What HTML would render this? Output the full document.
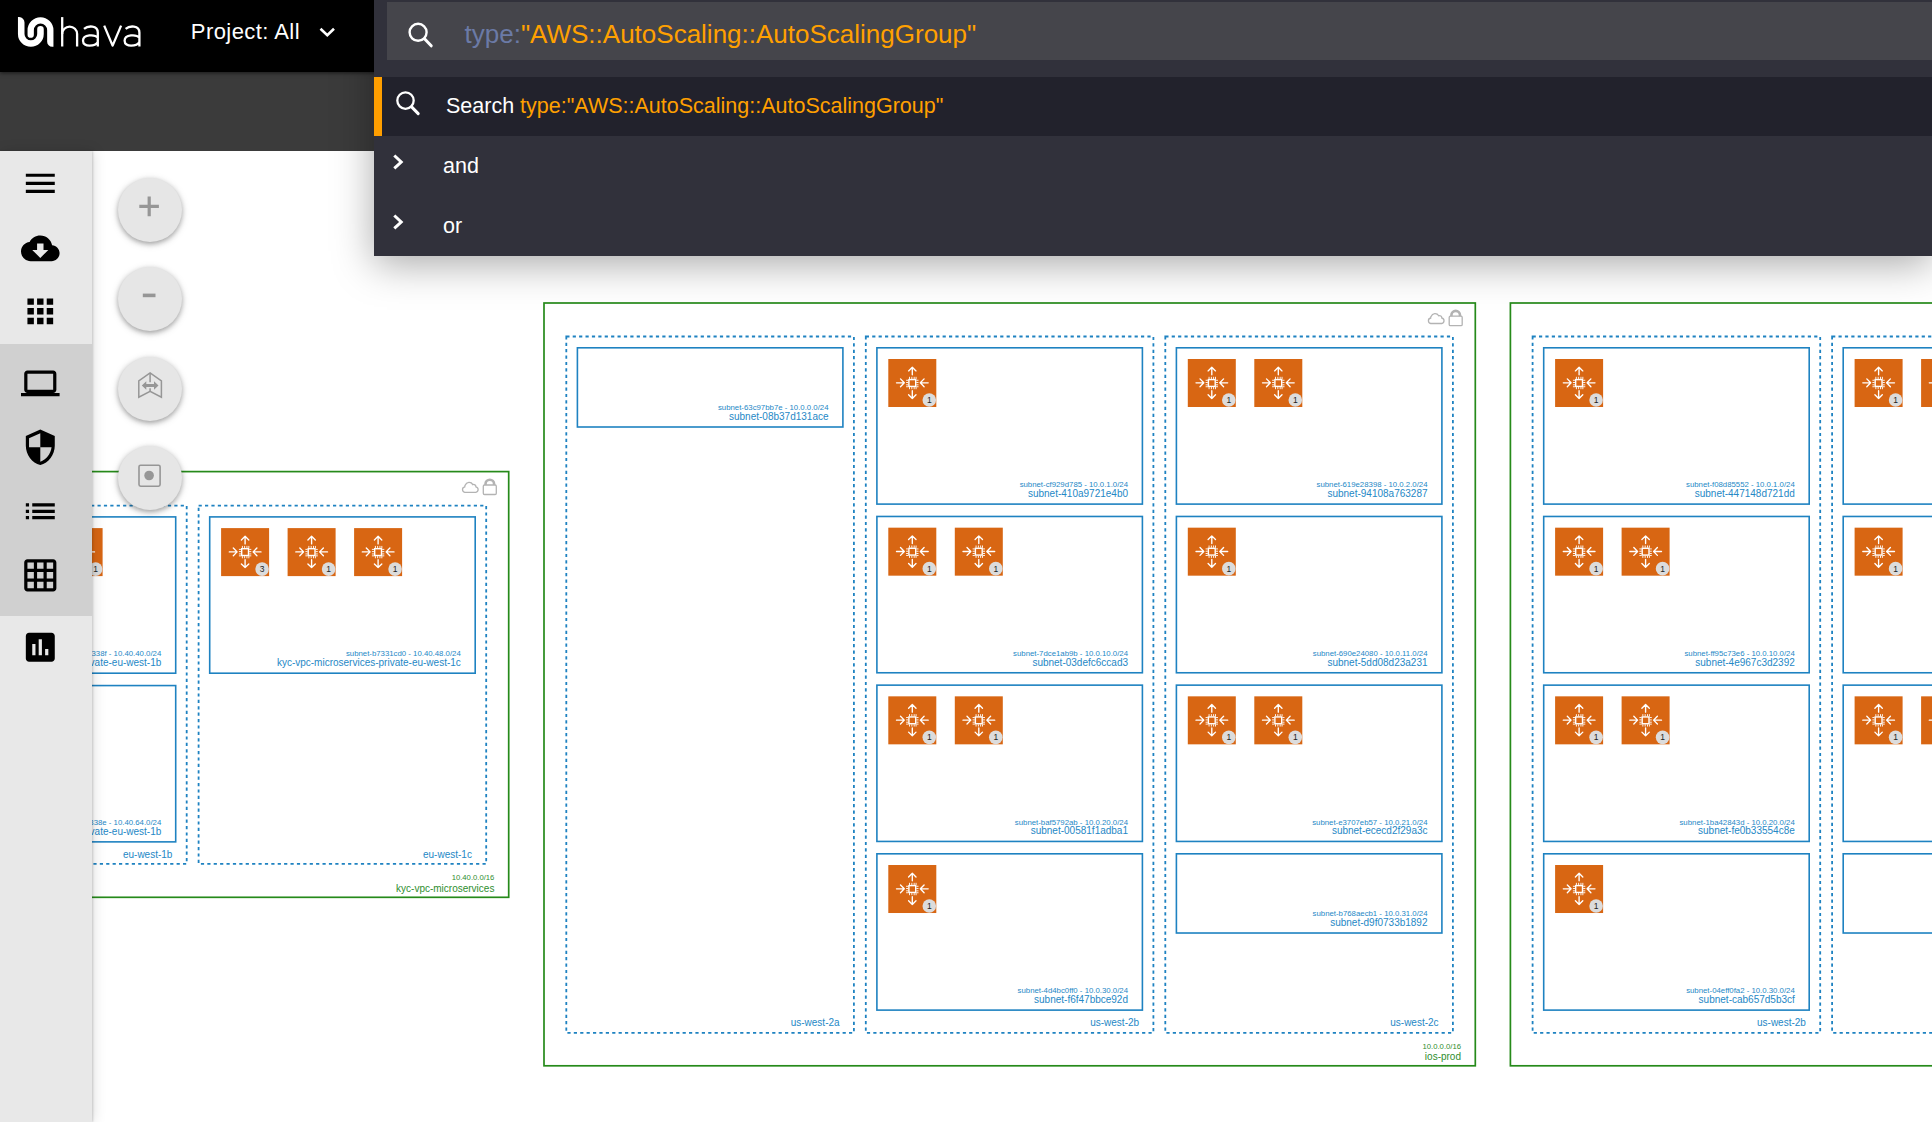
<!DOCTYPE html>
<html><head><meta charset="utf-8">
<style>
html,body{margin:0;padding:0;}
body{width:1932px;height:1122px;overflow:hidden;position:relative;background:#fff;font-family:"Liberation Sans",sans-serif;}
.abs{position:absolute;}
#diagram{position:absolute;left:0;top:0;}
#diagram text{font-family:"Liberation Sans",sans-serif;}
#hdr{position:absolute;left:0;top:0;width:1932px;height:72px;background:#000;z-index:2;box-shadow:0 1px 4px rgba(0,0,0,0.6);}
#gbar{position:absolute;left:0;top:72px;width:1932px;height:79px;background:#3b3b3b;}
#side{position:absolute;left:0;top:151px;width:92px;height:971px;background:#e8e8e8;box-shadow:1px 0 2px rgba(0,0,0,0.16),2px 0 12px rgba(0,0,0,0.13);}
#sideact{position:absolute;left:0;top:193px;width:92px;height:272px;background:#d0d0d0;}
.sic{position:absolute;left:21.3px;width:38.6px;height:38.6px;}
.zb{position:absolute;left:118px;width:64px;height:64px;border-radius:50%;background:#e6e6e6;box-shadow:0 2px 5px rgba(0,0,0,0.3),0 2px 10px rgba(0,0,0,0.12);}
.zb svg{position:absolute;left:0;top:0;}
#dd{z-index:3;position:absolute;left:374px;top:0;width:1558px;height:256px;background:#31313b;box-shadow:0 8px 38px rgba(0,0,0,0.34);}
#inp{position:absolute;left:13px;top:2px;width:1560px;height:58px;background:#45454b;}
#sel{position:absolute;left:0;top:77px;width:1558px;height:59px;background:#22222c;}
#obar{position:absolute;left:0;top:0;width:8px;height:59px;background:#ff9f00;}
.t{position:absolute;white-space:pre;line-height:1;}
</style></head><body>
<svg id="diagram" width="1932" height="1122" viewBox="0 0 1932 1122">
<defs>
<g id="asg">
<rect x="0" y="0" width="48" height="48" fill="#d86613"/>
<g fill="none" stroke="#fff" stroke-width="1.35" stroke-linecap="round" stroke-linejoin="round">
<path d="M24 8.2v7.6M20.3 11.9L24 8.2L27.7 11.9"/>
<path d="M24 31.7v7.8M20.3 35.8L24 39.5L27.7 35.8"/>
<path d="M8.2 23.8h7.7M12.2 19.9L16 23.8L12.2 27.7"/>
<path d="M39.9 23.8h-7.8M35.8 19.9L32 23.8L35.8 27.7"/>
</g>
<rect x="20.6" y="20.6" width="6.8" height="6.8" fill="none" stroke="#fff" stroke-width="1.4"/>
<g fill="#fff">
<rect x="20.8" y="17.8" width="0.9" height="2.2"/><rect x="23.1" y="17.8" width="0.9" height="2.2"/><rect x="25.4" y="17.8" width="0.9" height="2.2"/><rect x="27.3" y="17.8" width="0.9" height="2.2"/>
<rect x="20.8" y="28" width="0.9" height="2.2"/><rect x="23.1" y="28" width="0.9" height="2.2"/><rect x="25.4" y="28" width="0.9" height="2.2"/><rect x="27.3" y="28" width="0.9" height="2.2"/>
<rect x="17.8" y="20.8" width="2.2" height="0.9"/><rect x="17.8" y="23.1" width="2.2" height="0.9"/><rect x="17.8" y="25.4" width="2.2" height="0.9"/><rect x="17.8" y="27.3" width="2.2" height="0.9"/>
<rect x="28" y="20.8" width="2.2" height="0.9"/><rect x="28" y="23.1" width="2.2" height="0.9"/><rect x="28" y="25.4" width="2.2" height="0.9"/><rect x="28" y="27.3" width="2.2" height="0.9"/>
</g>
<circle cx="41" cy="41" r="6.8" fill="#dcdcdc"/>
</g>
</defs>
<rect x="544.00" y="303.00" width="931.30" height="762.80" fill="none" stroke="#268a1a" stroke-width="1.7"/>
<text x="1461.00" y="1048.57" font-size="7.7" fill="#2e8e2e" text-anchor="end">10.0.0.0/16</text>
<text x="1461.00" y="1060.10" font-size="10" fill="#2e8e2e" text-anchor="end">ios-prod</text>
<g transform="translate(1427.50,310.20)" fill="none" stroke="#b3b3b3" stroke-width="1.3"><path d="M3.2 13.3 H14.2 A2.8 2.8 0 0 0 14.3 7.8 A2.3 2.3 0 0 0 11.2 5.6 A4.2 4.2 0 0 0 3.6 6.2 A2.2 2.2 0 0 0 3.2 7.8 A2.8 2.8 0 0 0 3.2 13.3 Z"/><rect x="21.7" y="6" width="13" height="9.5" rx="1.2"/><path d="M23.9 6 V5 A4.3 4.3 0 0 1 32.5 5 V6" stroke-width="2.6"/></g>
<rect x="566.30" y="336.50" width="287.60" height="696.30" fill="none" stroke="#1e82c1" stroke-width="1.8" stroke-dasharray="3.2 3.2"/>
<text x="839.60" y="1026.40" font-size="10" fill="#2588c6" text-anchor="end">us-west-2a</text>
<rect x="577.40" y="347.80" width="265.50" height="79.20" fill="none" stroke="#1e82c1" stroke-width="1.6"/>
<text x="828.50" y="410.21" font-size="7.8" fill="#2588c6" text-anchor="end">subnet-63c97bb7e - 10.0.0.0/24</text>
<text x="828.50" y="419.90" font-size="10" fill="#2588c6" text-anchor="end">subnet-08b37d131ace</text>
<rect x="865.80" y="336.50" width="287.60" height="696.30" fill="none" stroke="#1e82c1" stroke-width="1.8" stroke-dasharray="3.2 3.2"/>
<text x="1139.10" y="1026.40" font-size="10" fill="#2588c6" text-anchor="end">us-west-2b</text>
<rect x="876.90" y="347.80" width="265.50" height="156.30" fill="none" stroke="#1e82c1" stroke-width="1.6"/>
<text x="1128.00" y="487.31" font-size="7.8" fill="#2588c6" text-anchor="end">subnet-cf929d785 - 10.0.1.0/24</text>
<text x="1128.00" y="497.00" font-size="10" fill="#2588c6" text-anchor="end">subnet-410a9721e4b0</text>
<use href="#asg" x="888.30" y="359.00"/>
<text x="929.30" y="402.90" font-size="8.5" fill="#222" text-anchor="middle">1</text>
<rect x="876.90" y="516.47" width="265.50" height="156.30" fill="none" stroke="#1e82c1" stroke-width="1.6"/>
<text x="1128.00" y="655.98" font-size="7.8" fill="#2588c6" text-anchor="end">subnet-7dce1ab9b - 10.0.10.0/24</text>
<text x="1128.00" y="665.67" font-size="10" fill="#2588c6" text-anchor="end">subnet-03defc6ccad3</text>
<use href="#asg" x="888.30" y="527.67"/>
<text x="929.30" y="571.57" font-size="8.5" fill="#222" text-anchor="middle">1</text>
<use href="#asg" x="954.80" y="527.67"/>
<text x="995.80" y="571.57" font-size="8.5" fill="#222" text-anchor="middle">1</text>
<rect x="876.90" y="685.14" width="265.50" height="156.30" fill="none" stroke="#1e82c1" stroke-width="1.6"/>
<text x="1128.00" y="824.65" font-size="7.8" fill="#2588c6" text-anchor="end">subnet-baf5792ab - 10.0.20.0/24</text>
<text x="1128.00" y="834.34" font-size="10" fill="#2588c6" text-anchor="end">subnet-00581f1adba1</text>
<use href="#asg" x="888.30" y="696.34"/>
<text x="929.30" y="740.24" font-size="8.5" fill="#222" text-anchor="middle">1</text>
<use href="#asg" x="954.80" y="696.34"/>
<text x="995.80" y="740.24" font-size="8.5" fill="#222" text-anchor="middle">1</text>
<rect x="876.90" y="853.81" width="265.50" height="156.30" fill="none" stroke="#1e82c1" stroke-width="1.6"/>
<text x="1128.00" y="993.32" font-size="7.8" fill="#2588c6" text-anchor="end">subnet-4d4bc0ff0 - 10.0.30.0/24</text>
<text x="1128.00" y="1003.01" font-size="10" fill="#2588c6" text-anchor="end">subnet-f6f47bbce92d</text>
<use href="#asg" x="888.30" y="865.01"/>
<text x="929.30" y="908.91" font-size="8.5" fill="#222" text-anchor="middle">1</text>
<rect x="1165.30" y="336.50" width="287.60" height="696.30" fill="none" stroke="#1e82c1" stroke-width="1.8" stroke-dasharray="3.2 3.2"/>
<text x="1438.60" y="1026.40" font-size="10" fill="#2588c6" text-anchor="end">us-west-2c</text>
<rect x="1176.40" y="347.80" width="265.50" height="156.30" fill="none" stroke="#1e82c1" stroke-width="1.6"/>
<text x="1427.50" y="487.31" font-size="7.8" fill="#2588c6" text-anchor="end">subnet-619e28398 - 10.0.2.0/24</text>
<text x="1427.50" y="497.00" font-size="10" fill="#2588c6" text-anchor="end">subnet-94108a763287</text>
<use href="#asg" x="1187.80" y="359.00"/>
<text x="1228.80" y="402.90" font-size="8.5" fill="#222" text-anchor="middle">1</text>
<use href="#asg" x="1254.30" y="359.00"/>
<text x="1295.30" y="402.90" font-size="8.5" fill="#222" text-anchor="middle">1</text>
<rect x="1176.40" y="516.47" width="265.50" height="156.30" fill="none" stroke="#1e82c1" stroke-width="1.6"/>
<text x="1427.50" y="655.98" font-size="7.8" fill="#2588c6" text-anchor="end">subnet-690e24080 - 10.0.11.0/24</text>
<text x="1427.50" y="665.67" font-size="10" fill="#2588c6" text-anchor="end">subnet-5dd08d23a231</text>
<use href="#asg" x="1187.80" y="527.67"/>
<text x="1228.80" y="571.57" font-size="8.5" fill="#222" text-anchor="middle">1</text>
<rect x="1176.40" y="685.14" width="265.50" height="156.30" fill="none" stroke="#1e82c1" stroke-width="1.6"/>
<text x="1427.50" y="824.65" font-size="7.8" fill="#2588c6" text-anchor="end">subnet-e3707eb57 - 10.0.21.0/24</text>
<text x="1427.50" y="834.34" font-size="10" fill="#2588c6" text-anchor="end">subnet-ececd2f29a3c</text>
<use href="#asg" x="1187.80" y="696.34"/>
<text x="1228.80" y="740.24" font-size="8.5" fill="#222" text-anchor="middle">1</text>
<use href="#asg" x="1254.30" y="696.34"/>
<text x="1295.30" y="740.24" font-size="8.5" fill="#222" text-anchor="middle">1</text>
<rect x="1176.40" y="853.81" width="265.50" height="79.20" fill="none" stroke="#1e82c1" stroke-width="1.6"/>
<text x="1427.50" y="916.22" font-size="7.8" fill="#2588c6" text-anchor="end">subnet-b768aecb1 - 10.0.31.0/24</text>
<text x="1427.50" y="925.91" font-size="10" fill="#2588c6" text-anchor="end">subnet-d9f0733b1892</text>
<rect x="1510.40" y="303.00" width="931.30" height="762.80" fill="none" stroke="#268a1a" stroke-width="1.7"/>
<text x="2427.40" y="1048.57" font-size="7.7" fill="#2e8e2e" text-anchor="end">10.0.0.0/16</text>
<text x="2427.40" y="1060.10" font-size="10" fill="#2e8e2e" text-anchor="end">ios-dev</text>
<rect x="1532.60" y="336.50" width="287.60" height="696.30" fill="none" stroke="#1e82c1" stroke-width="1.8" stroke-dasharray="3.2 3.2"/>
<text x="1805.90" y="1026.40" font-size="10" fill="#2588c6" text-anchor="end">us-west-2b</text>
<rect x="1543.70" y="347.80" width="265.50" height="156.30" fill="none" stroke="#1e82c1" stroke-width="1.6"/>
<text x="1794.80" y="487.31" font-size="7.8" fill="#2588c6" text-anchor="end">subnet-f08d85552 - 10.0.1.0/24</text>
<text x="1794.80" y="497.00" font-size="10" fill="#2588c6" text-anchor="end">subnet-447148d721dd</text>
<use href="#asg" x="1555.10" y="359.00"/>
<text x="1596.10" y="402.90" font-size="8.5" fill="#222" text-anchor="middle">1</text>
<rect x="1543.70" y="516.47" width="265.50" height="156.30" fill="none" stroke="#1e82c1" stroke-width="1.6"/>
<text x="1794.80" y="655.98" font-size="7.8" fill="#2588c6" text-anchor="end">subnet-ff95c73e6 - 10.0.10.0/24</text>
<text x="1794.80" y="665.67" font-size="10" fill="#2588c6" text-anchor="end">subnet-4e967c3d2392</text>
<use href="#asg" x="1555.10" y="527.67"/>
<text x="1596.10" y="571.57" font-size="8.5" fill="#222" text-anchor="middle">1</text>
<use href="#asg" x="1621.60" y="527.67"/>
<text x="1662.60" y="571.57" font-size="8.5" fill="#222" text-anchor="middle">1</text>
<rect x="1543.70" y="685.14" width="265.50" height="156.30" fill="none" stroke="#1e82c1" stroke-width="1.6"/>
<text x="1794.80" y="824.65" font-size="7.8" fill="#2588c6" text-anchor="end">subnet-1ba42843d - 10.0.20.0/24</text>
<text x="1794.80" y="834.34" font-size="10" fill="#2588c6" text-anchor="end">subnet-fe0b33554c8e</text>
<use href="#asg" x="1555.10" y="696.34"/>
<text x="1596.10" y="740.24" font-size="8.5" fill="#222" text-anchor="middle">1</text>
<use href="#asg" x="1621.60" y="696.34"/>
<text x="1662.60" y="740.24" font-size="8.5" fill="#222" text-anchor="middle">1</text>
<rect x="1543.70" y="853.81" width="265.50" height="156.30" fill="none" stroke="#1e82c1" stroke-width="1.6"/>
<text x="1794.80" y="993.32" font-size="7.8" fill="#2588c6" text-anchor="end">subnet-04eff0fa2 - 10.0.30.0/24</text>
<text x="1794.80" y="1003.01" font-size="10" fill="#2588c6" text-anchor="end">subnet-cab657d5b3cf</text>
<use href="#asg" x="1555.10" y="865.01"/>
<text x="1596.10" y="908.91" font-size="8.5" fill="#222" text-anchor="middle">1</text>
<rect x="1832.10" y="336.50" width="287.60" height="696.30" fill="none" stroke="#1e82c1" stroke-width="1.8" stroke-dasharray="3.2 3.2"/>
<text x="2105.40" y="1026.40" font-size="10" fill="#2588c6" text-anchor="end">us-west-2c</text>
<rect x="1843.20" y="347.80" width="265.50" height="156.30" fill="none" stroke="#1e82c1" stroke-width="1.6"/>
<text x="2094.30" y="487.31" font-size="7.8" fill="#2588c6" text-anchor="end">subnet-1 - 10.0.2.0/24</text>
<text x="2094.30" y="497.00" font-size="10" fill="#2588c6" text-anchor="end">subnet-1</text>
<use href="#asg" x="1854.60" y="359.00"/>
<text x="1895.60" y="402.90" font-size="8.5" fill="#222" text-anchor="middle">1</text>
<use href="#asg" x="1921.10" y="359.00"/>
<text x="1962.10" y="402.90" font-size="8.5" fill="#222" text-anchor="middle">1</text>
<rect x="1843.20" y="516.47" width="265.50" height="156.30" fill="none" stroke="#1e82c1" stroke-width="1.6"/>
<text x="2094.30" y="655.98" font-size="7.8" fill="#2588c6" text-anchor="end">subnet-2 - 10.0.11.0/24</text>
<text x="2094.30" y="665.67" font-size="10" fill="#2588c6" text-anchor="end">subnet-2</text>
<use href="#asg" x="1854.60" y="527.67"/>
<text x="1895.60" y="571.57" font-size="8.5" fill="#222" text-anchor="middle">1</text>
<rect x="1843.20" y="685.14" width="265.50" height="156.30" fill="none" stroke="#1e82c1" stroke-width="1.6"/>
<text x="2094.30" y="824.65" font-size="7.8" fill="#2588c6" text-anchor="end">subnet-3 - 10.0.21.0/24</text>
<text x="2094.30" y="834.34" font-size="10" fill="#2588c6" text-anchor="end">subnet-3</text>
<use href="#asg" x="1854.60" y="696.34"/>
<text x="1895.60" y="740.24" font-size="8.5" fill="#222" text-anchor="middle">1</text>
<use href="#asg" x="1921.10" y="696.34"/>
<text x="1962.10" y="740.24" font-size="8.5" fill="#222" text-anchor="middle">1</text>
<rect x="1843.20" y="853.81" width="265.50" height="79.20" fill="none" stroke="#1e82c1" stroke-width="1.6"/>
<text x="2094.30" y="916.22" font-size="7.8" fill="#2588c6" text-anchor="end">subnet-4 - 10.0.31.0/24</text>
<text x="2094.30" y="925.91" font-size="10" fill="#2588c6" text-anchor="end">subnet-4</text>
<rect x="-700.00" y="471.60" width="1208.70" height="425.70" fill="none" stroke="#268a1a" stroke-width="1.7"/>
<text x="494.40" y="880.07" font-size="7.7" fill="#2e8e2e" text-anchor="end">10.40.0.0/16</text>
<text x="494.40" y="891.60" font-size="10" fill="#2e8e2e" text-anchor="end">kyc-vpc-microservices</text>
<g transform="translate(461.60,479.00)" fill="none" stroke="#b3b3b3" stroke-width="1.3"><path d="M3.2 13.3 H14.2 A2.8 2.8 0 0 0 14.3 7.8 A2.3 2.3 0 0 0 11.2 5.6 A4.2 4.2 0 0 0 3.6 6.2 A2.2 2.2 0 0 0 3.2 7.8 A2.8 2.8 0 0 0 3.2 13.3 Z"/><rect x="21.7" y="6" width="13" height="9.5" rx="1.2"/><path d="M23.9 6 V5 A4.3 4.3 0 0 1 32.5 5 V6" stroke-width="2.6"/></g>
<rect x="198.60" y="505.60" width="287.60" height="358.30" fill="none" stroke="#1e82c1" stroke-width="1.8" stroke-dasharray="3.2 3.2"/>
<text x="471.90" y="857.50" font-size="10" fill="#2588c6" text-anchor="end">eu-west-1c</text>
<rect x="209.70" y="516.90" width="265.50" height="156.30" fill="none" stroke="#1e82c1" stroke-width="1.6"/>
<text x="460.80" y="656.41" font-size="7.8" fill="#2588c6" text-anchor="end">subnet-b7331cd0 - 10.40.48.0/24</text>
<text x="460.80" y="666.10" font-size="10" fill="#2588c6" text-anchor="end">kyc-vpc-microservices-private-eu-west-1c</text>
<use href="#asg" x="221.10" y="528.10"/>
<text x="262.10" y="572.00" font-size="8.5" fill="#222" text-anchor="middle">3</text>
<use href="#asg" x="287.60" y="528.10"/>
<text x="328.60" y="572.00" font-size="8.5" fill="#222" text-anchor="middle">1</text>
<use href="#asg" x="354.10" y="528.10"/>
<text x="395.10" y="572.00" font-size="8.5" fill="#222" text-anchor="middle">1</text>
<rect x="-100.90" y="505.60" width="287.60" height="358.30" fill="none" stroke="#1e82c1" stroke-width="1.8" stroke-dasharray="3.2 3.2"/>
<text x="172.40" y="857.50" font-size="10" fill="#2588c6" text-anchor="end">eu-west-1b</text>
<rect x="-89.80" y="516.90" width="265.50" height="156.30" fill="none" stroke="#1e82c1" stroke-width="1.6"/>
<text x="161.30" y="656.41" font-size="7.8" fill="#2588c6" text-anchor="end">subnet-a1b2c338f - 10.40.40.0/24</text>
<text x="161.30" y="666.10" font-size="10" fill="#2588c6" text-anchor="end">kyc-vpc-microservices-private-eu-west-1b</text>
<use href="#asg" x="-78.40" y="528.10"/>
<text x="-37.40" y="572.00" font-size="8.5" fill="#222" text-anchor="middle">1</text>
<use href="#asg" x="-11.90" y="528.10"/>
<text x="29.10" y="572.00" font-size="8.5" fill="#222" text-anchor="middle">1</text>
<use href="#asg" x="54.60" y="528.10"/>
<text x="95.60" y="572.00" font-size="8.5" fill="#222" text-anchor="middle">1</text>
<rect x="-89.80" y="685.57" width="265.50" height="156.30" fill="none" stroke="#1e82c1" stroke-width="1.6"/>
<text x="161.30" y="825.08" font-size="7.8" fill="#2588c6" text-anchor="end">subnet-a1b2c338e - 10.40.64.0/24</text>
<text x="161.30" y="834.77" font-size="10" fill="#2588c6" text-anchor="end">kyc-vpc-microservices-private-eu-west-1b</text>
</svg>

<div id="hdr">
<svg class="abs" style="left:0;top:0" width="160" height="72" viewBox="0 0 160 72">
<path fill="#fff" d="M17.95 17.1H19.2A5.3 5.3 0 0 1 24.5 22.4V33.9A6.35 6.35 0 0 0 37.2 33.9V29.3A3.275 3.275 0 0 1 43.75 29.3V33.9A12.9 12.9 0 0 1 17.95 33.9Z"/>
<path fill="#fff" d="M27.55 34.7V30.2A12.95 12.95 0 0 1 53.45 30.2V46.8H52.3A5.15 5.15 0 0 1 47.15 41.65V30.2A6.65 6.65 0 0 0 33.85 30.2V34.7A3.15 3.15 0 0 1 27.55 34.7Z"/>
<g fill="none" stroke="#fff" stroke-width="2.3" stroke-linejoin="round">
<path d="M62.2 17.1V46.5"/>
<path d="M62.2 34A7.45 7.45 0 0 1 77.1 34V46.5"/>
<path d="M84 28.8C88 25.5 97.8 25 97.8 32.5V46.5M97.8 37.6C95 34.4 83 34 83 40.7C83 47.8 95.5 46.4 97.8 42"/>
<path d="M104.2 25.6L112.6 45.6L121.1 25.6"/>
<path d="M125.6 28.8C129.6 25.5 139.4 25 139.4 32.5V46.5M139.4 37.6C136.6 34.4 124.6 34 124.6 40.7C124.6 47.8 137.1 46.4 139.4 42"/>
</g>
</svg>
<div class="t" style="left:190.8px;top:20.7px;font-size:22px;letter-spacing:0.44px;color:#fff;">Project: All</div>
<svg class="abs" style="left:316px;top:24px" width="24" height="16" viewBox="0 0 24 16"><path d="M4.5 4.8L11.3 11.3L18 4.8" fill="none" stroke="#fff" stroke-width="2.6"/></svg>
</div>

<div id="gbar"></div>

<div id="side">
<div id="sideact"></div>
<svg class="sic" style="top:13px" viewBox="0 0 24 24"><path d="M3 18h18v-2H3v2zm0-5h18v-2H3v2zm0-7v2h18V6H3z"/></svg>
<svg class="sic" style="top:77.6px" viewBox="0 0 24 24"><path d="M19.35 10.04C18.67 6.59 15.64 4 12 4 9.11 4 6.6 5.64 5.35 8.04 2.34 8.36 0 10.91 0 14c0 3.31 2.69 6 6 6h13c2.76 0 5-2.24 5-5 0-2.64-2.05-4.78-4.65-4.96zM17 13l-5 5-5-5h3V9h4v4h3z"/></svg>
<svg class="sic" style="top:140.9px" viewBox="0 0 24 24"><path d="M4 8h4V4H4v4zm6 12h4v-4h-4v4zm-6 0h4v-4H4v4zm0-6h4v-4H4v4zm6 0h4v-4h-4v4zm6-10v4h4V4h-4zm-6 4h4V4h-4v4zm6 6h4v-4h-4v4zm0 6h4v-4h-4v4z"/></svg>
<svg class="sic" style="top:213.4px" viewBox="0 0 24 24"><path d="M20 18c1.1 0 1.99-.9 1.99-2L22 6c0-1.1-.9-2-2-2H4c-1.1 0-2 .9-2 2v10c0 1.1.9 2 2 2H0v2h24v-2h-4zM4 6h16v10H4V6z"/></svg>
<svg class="sic" style="top:277.4px" viewBox="0 0 24 24"><path d="M12 1L3 5v6c0 5.55 3.84 10.74 9 12 5.16-1.26 9-6.45 9-12V5l-9-4zm0 10.99h7c-.53 4.12-3.28 7.79-7 8.94V12H5V6.3l7-3.11v8.8z"/></svg>
<svg class="sic" style="top:341.2px" viewBox="0 0 24 24"><path d="M3 13h2v-2H3v2zm0 4h2v-2H3v2zm0-8h2V7H3v2zm4 4h14v-2H7v2zm0 4h14v-2H7v2zM7 7v2h14V7H7z"/></svg>
<svg class="sic" style="top:405.4px" viewBox="0 0 24 24"><path d="M20 2H4c-1.1 0-2 .9-2 2v16c0 1.1.9 2 2 2h16c1.1 0 2-.9 2-2V4c0-1.1-.9-2-2-2zM8 20H4v-4h4v4zm0-6H4v-4h4v4zm0-6H4V4h4v4zm6 12h-4v-4h4v4zm0-6h-4v-4h4v4zm0-6h-4V4h4v4zm6 12h-4v-4h4v4zm0-6h-4v-4h4v4zm0-6h-4V4h4v4z"/></svg>
<svg class="sic" style="top:477.2px" viewBox="0 0 24 24"><path d="M19 3H5c-1.1 0-2 .9-2 2v14c0 1.1.9 2 2 2h14c1.1 0 2-.9 2-2V5c0-1.1-.9-2-2-2zM9 17H7v-7h2v7zm4 0h-2V7h2v10zm4 0h-2v-4h2v4z"/></svg>
</div>

<div class="zb" style="top:177.5px"><svg width="64" height="64" viewBox="0 0 64 64"><path d="M21.3 28.4H40.9M31.2 18.5V38.2" stroke="#969696" stroke-width="3.2" fill="none"/></svg></div>
<div class="zb" style="top:266.5px"><svg width="64" height="64" viewBox="0 0 64 64"><path d="M24.8 28.4H37.5" stroke="#969696" stroke-width="3.6" fill="none"/></svg></div>
<div class="zb" style="top:356.5px"><svg width="64" height="64" viewBox="0 0 64 64">
<g fill="none" stroke="#969696" stroke-width="1.5"><path d="M20.8 40.2V23.8L32.1 16L43.4 23.8V40.2L32.1 34.3Z"/><path d="M32.1 16V25.3M32.1 31.3V34.3"/></g>
<path d="M23.8 28.5L28.3 24.2V27H36V24.2L40.5 28.5L36 32.8V30H28.3V32.8Z" fill="#969696"/>
</svg></div>
<div class="zb" style="top:445.5px"><svg width="64" height="64" viewBox="0 0 64 64">
<rect x="21" y="19.2" width="21.1" height="21" rx="1.6" fill="none" stroke="#969696" stroke-width="1.6"/><circle cx="31.1" cy="29.5" r="4.8" fill="#969696"/>
</svg></div>

<div id="dd">
<div id="inp"></div>
<svg class="abs" style="left:30px;top:15px" width="40" height="40" viewBox="0 0 40 40"><circle cx="14.1" cy="17.3" r="8.5" fill="none" stroke="#fff" stroke-width="2.4"/><path d="M20.5 23.8L27.2 30.8" stroke="#fff" stroke-width="3" stroke-linecap="round"/></svg>
<div class="t" style="left:90.5px;top:21px;font-size:26px;"><span style="color:#6b7aa6">type:</span><span style="color:#ffa000">"AWS::AutoScaling::AutoScalingGroup"</span></div>
<div id="sel"><div id="obar"></div></div>
<svg class="abs" style="left:18px;top:86px" width="40" height="40" viewBox="0 0 40 40"><circle cx="13.5" cy="14.6" r="8.2" fill="none" stroke="#fff" stroke-width="2.3"/><path d="M19.6 20.9L26.2 27.6" stroke="#fff" stroke-width="3" stroke-linecap="round"/></svg>
<div class="t" style="left:72px;top:96px;font-size:21.5px;"><span style="color:#fff">Search </span><span style="color:#ffa000">type:"AWS::AutoScaling::AutoScalingGroup"</span></div>
<svg class="abs" style="left:14px;top:150px" width="24" height="24" viewBox="0 0 24 24"><path d="M6.3 5.5L13.2 12L6.3 18.4" fill="none" stroke="#fff" stroke-width="3"/></svg>
<svg class="abs" style="left:14px;top:210px" width="24" height="24" viewBox="0 0 24 24"><path d="M6.3 5.5L13.2 12L6.3 18.4" fill="none" stroke="#fff" stroke-width="3"/></svg>
<div class="t" style="left:69px;top:156px;font-size:21.5px;color:#fff;">and</div>
<div class="t" style="left:69px;top:216px;font-size:21.5px;color:#fff;">or</div>
</div>
</body></html>
